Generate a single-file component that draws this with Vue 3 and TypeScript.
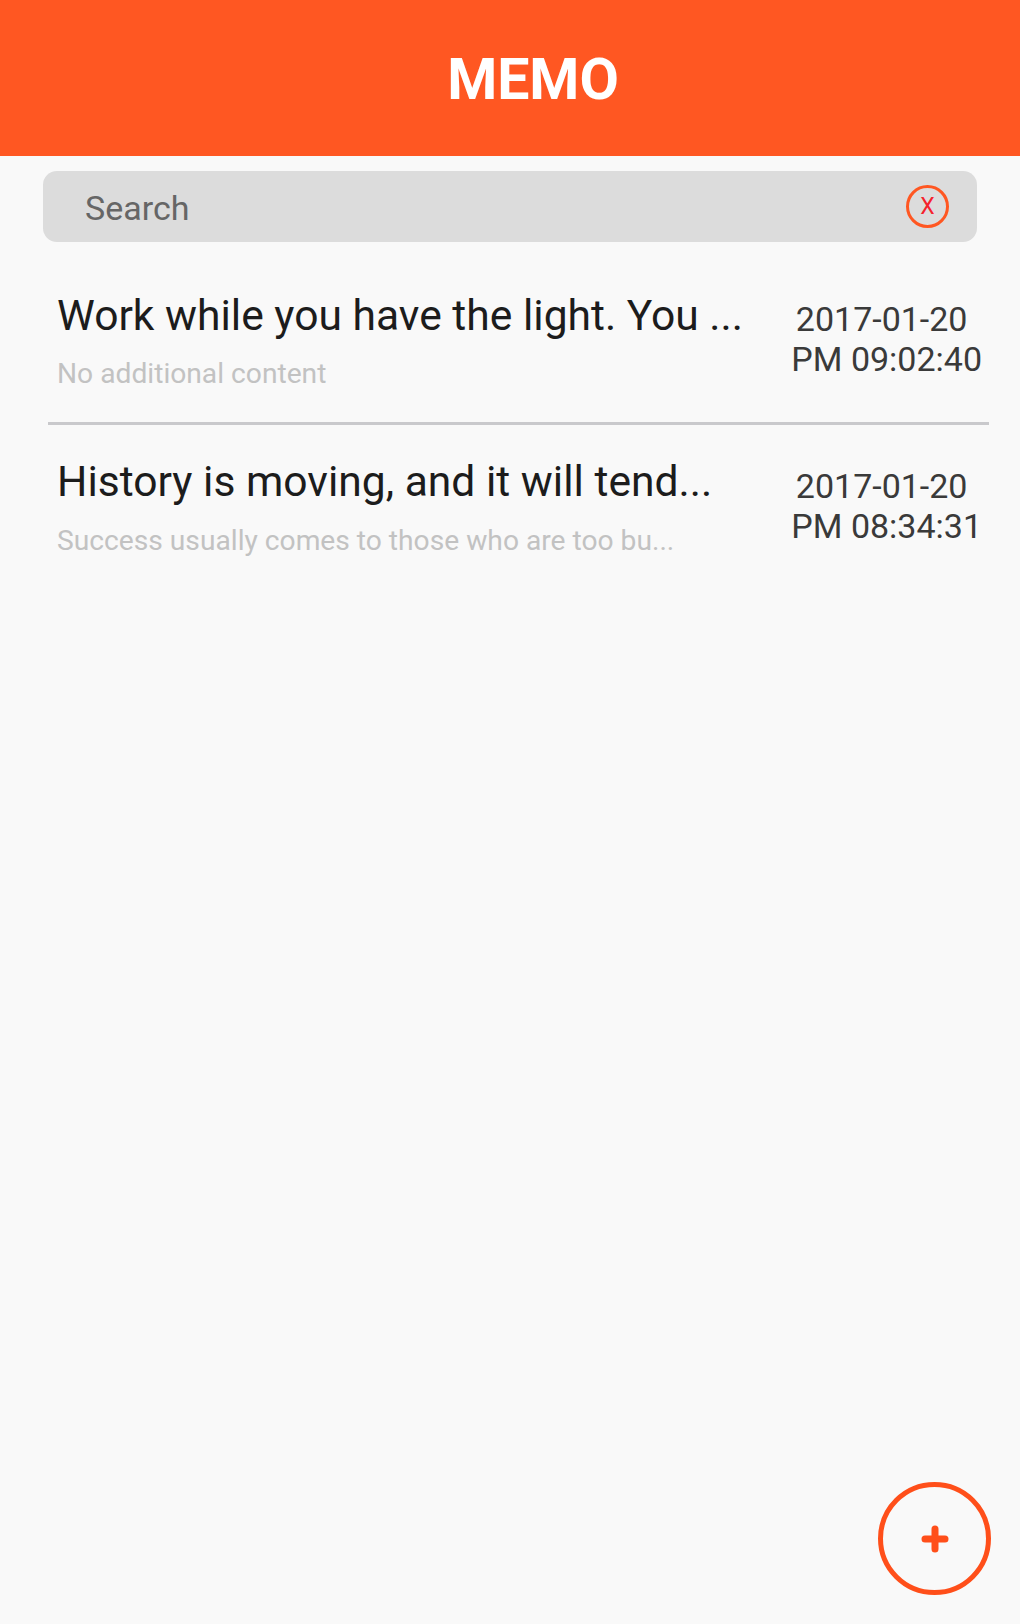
<script setup lang="ts">
interface Memo {
  title: string
  body: string
  date: string
  time: string
}

const memos: Memo[] = [
  {
    title: 'Work while you have the light. You ...',
    body: 'No additional content',
    date: '2017-01-20',
    time: 'PM 09:02:40',
  },
  {
    title: 'History is moving, and it will tend...',
    body: 'Success usually comes to those who are too bu...',
    date: '2017-01-20',
    time: 'PM 08:34:31',
  },
]
</script>

<template>
  <div class="screen">
    <header class="header"><h1 class="brand">MEMO</h1></header>
    <div class="search">
      <span class="placeholder">Search</span>
      <span class="clear">X</span>
    </div>
    <ul class="list">
      <li v-for="memo in memos" :key="memo.time" class="row">
        <div class="main">
          <div class="title">{{ memo.title }}</div>
          <div class="body">{{ memo.body }}</div>
        </div>
        <div class="stamp">
          <div class="date">{{ memo.date }}</div>
          <div class="time">{{ memo.time }}</div>
        </div>
      </li>
    </ul>
    <button class="fab" type="button" aria-label="Add">
      <svg width="28" height="28" viewBox="0 0 28 28">
        <path d="M14 4v20M4 14h20" stroke="#ff4f1a" stroke-width="7" stroke-linecap="round" fill="none" />
      </svg>
    </button>
  </div>
</template>

<style>
html, body { margin: 0; background: #f9f9f9; }
</style>

<style scoped>
.screen {
  position: relative;
  width: 1020px;
  height: 1624px;
  overflow: hidden;
  background: #f9f9f9;
  font-family: Roboto, "Liberation Sans", sans-serif;
}
.header {
  height: 156px;
  background: #ff5722;
  display: flex;
  align-items: center;
  justify-content: center;
}
.brand {
  margin: 4px 0 0 46px;
  color: #fff;
  font-size: 57.2px;
  font-weight: 700;
  line-height: 1;
}
.search {
  margin: 15px 43px 0;
  height: 71px;
  border-radius: 14px;
  background: #dcdcdc;
  display: flex;
  align-items: center;
  justify-content: space-between;
  padding: 0 28px 0 42px;
}
.placeholder {
  color: #666;
  font-size: 34px;
  margin-top: 2px;
}
.clear {
  box-sizing: border-box;
  width: 43px;
  height: 43px;
  border: 3px solid #ff5722;
  border-radius: 50%;
  color: #f5222d;
  font-size: 23px;
  font-weight: 400;
  line-height: 38px;
  text-align: center;
}
.list {
  list-style: none;
  margin: 19px 31px 0 48px;
  padding: 0;
}
.row {
  box-sizing: border-box;
  height: 167px;
  display: flex;
  justify-content: space-between;
  padding: 0 7px 0 9px;
}
.row:first-child {
  height: 164px;
  border-bottom: 3px solid #c9c9cc;
}
.main { padding-top: 30px; }
.row:first-child .main { padding-top: 28px; }
.title {
  color: #1c1c1c;
  font-size: 42.6px;
  line-height: 52px;
  white-space: nowrap;
}
.body {
  margin-top: 17px;
  color: #c2c2c2;
  font-size: 28.2px;
  line-height: 34px;
  white-space: nowrap;
}
.row:first-child .body { margin-top: 16px; }
.stamp {
  padding-top: 41px;
  color: #3a3a3a;
  font-size: 34px;
  line-height: 40px;
  text-align: center;
  white-space: nowrap;
}
.row:first-child .stamp { padding-top: 38px; }
.date { padding-right: 10px; }
.fab {
  position: absolute;
  left: 878px;
  top: 1482px;
  box-sizing: border-box;
  width: 113px;
  height: 113px;
  padding: 0;
  border: 5px solid #ff4f1a;
  border-radius: 50%;
  background: transparent;
  display: flex;
  align-items: center;
  justify-content: center;
}
</style>
